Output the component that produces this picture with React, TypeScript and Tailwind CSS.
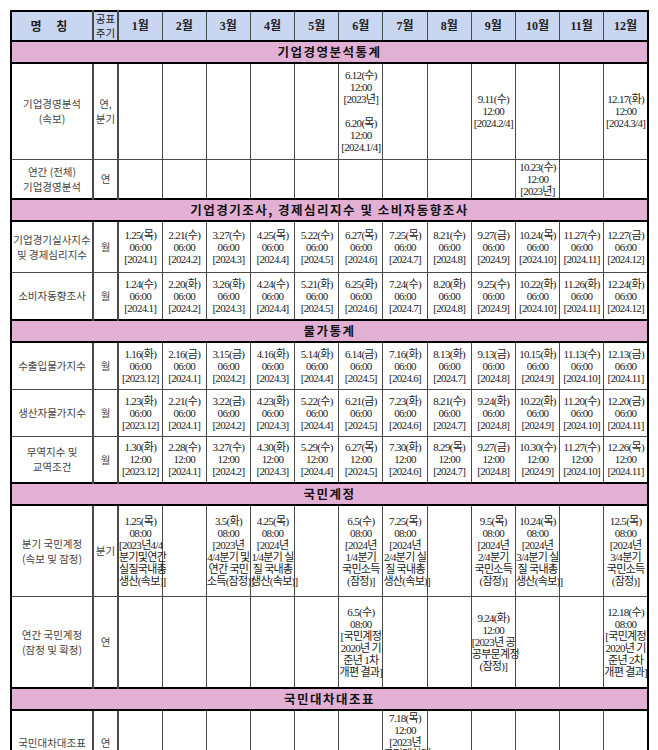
import React from "react";

type Cell = string[] | null;
type Row = { name: string[]; cycle: string[]; cells: Cell[]; h: string };
type Section = { title: string; rows: Row[] };

const P24 = ["2024.1", "2024.2", "2024.3", "2024.4", "2024.5", "2024.6", "2024.7", "2024.8", "2024.9", "2024.10", "2024.11", "2024.12"];
const P23 = ["2023.12", ...P24.slice(0, 11)];

const monthly = (dates: string[], time: string, periods: string[]): Cell[] =>
  dates.map((d, i) => [d, time, `[${periods[i]}]`]);

const at = (entries: Record<number, string[]>): Cell[] =>
  Array.from({ length: 12 }, (_, i) => entries[i + 1] ?? null);

const SECTIONS: Section[] = [
  {
    title: "기업경영분석통계",
    rows: [
      {
        name: ["기업경영분석", "(속보)"],
        cycle: ["연,", "분기"],
        h: "h-[96px]",
        cells: at({
          6: ["6.12(수)", "12:00", "[2023년]", "", "6.20(목)", "12:00", "[2024.1/4]"],
          9: ["9.11(수)", "12:00", "[2024.2/4]"],
          12: ["12.17(화)", "12:00", "[2024.3/4]"],
        }),
      },
      {
        name: ["연간 (전체)", "기업경영분석"],
        cycle: ["연"],
        h: "h-[40px]",
        cells: at({ 10: ["10.23(수)", "12:00", "[2023년]"] }),
      },
    ],
  },
  {
    title: "기업경기조사, 경제심리지수 및 소비자동향조사",
    rows: [
      {
        name: ["기업경기실사지수", "및 경제심리지수"],
        cycle: ["월"],
        h: "h-[51px]",
        cells: monthly(
          ["1.25(목)", "2.21(수)", "3.27(수)", "4.25(목)", "5.22(수)", "6.27(목)", "7.25(목)", "8.21(수)", "9.27(금)", "10.24(목)", "11.27(수)", "12.27(금)"],
          "06:00",
          P24
        ),
      },
      {
        name: ["소비자동향조사"],
        cycle: ["월"],
        h: "h-[48px]",
        cells: monthly(
          ["1.24(수)", "2.20(화)", "3.26(화)", "4.24(수)", "5.21(화)", "6.25(화)", "7.24(수)", "8.20(화)", "9.25(수)", "10.22(화)", "11.26(화)", "12.24(화)"],
          "06:00",
          P24
        ),
      },
    ],
  },
  {
    title: "물가통계",
    rows: [
      {
        name: ["수출입물가지수"],
        cycle: ["월"],
        h: "h-[47px]",
        cells: monthly(
          ["1.16(화)", "2.16(금)", "3.15(금)", "4.16(화)", "5.14(화)", "6.14(금)", "7.16(화)", "8.13(화)", "9.13(금)", "10.15(화)", "11.13(수)", "12.13(금)"],
          "06:00",
          P23
        ),
      },
      {
        name: ["생산자물가지수"],
        cycle: ["월"],
        h: "h-[47px]",
        cells: monthly(
          ["1.23(화)", "2.21(수)", "3.22(금)", "4.23(화)", "5.22(수)", "6.21(금)", "7.23(화)", "8.21(수)", "9.24(화)", "10.22(화)", "11.20(수)", "12.20(금)"],
          "06:00",
          P23
        ),
      },
      {
        name: ["무역지수 및", "교역조건"],
        cycle: ["월"],
        h: "h-[47px]",
        cells: monthly(
          ["1.30(화)", "2.28(수)", "3.27(수)", "4.30(화)", "5.29(수)", "6.27(목)", "7.30(화)", "8.29(목)", "9.27(금)", "10.30(수)", "11.27(수)", "12.26(목)"],
          "12:00",
          P23
        ),
      },
    ],
  },
  {
    title: "국민계정",
    rows: [
      {
        name: ["분기 국민계정", "(속보 및 잠정)"],
        cycle: ["분기"],
        h: "h-[91px]",
        cells: at({
          1: ["1.25(목)", "08:00", "[2023년4/4", "분기및연간", "실질국내총", "생산(속보)]"],
          3: ["3.5(화)", "08:00", "[2023년", "4/4분기 및", "연간 국민", "소득(잠정)]"],
          4: ["4.25(목)", "08:00", "[2024년", "1/4분기 실", "질 국내총", "생산(속보)]"],
          6: ["6.5(수)", "08:00", "[2024년", "1/4분기", "국민소득", "(잠정)]"],
          7: ["7.25(목)", "08:00", "[2024년", "2/4분기 실", "질 국내총", "생산(속보)]"],
          9: ["9.5(목)", "08:00", "[2024년", "2/4분기", "국민소득", "(잠정)]"],
          10: ["10.24(목)", "08:00", "[2024년", "3/4분기 실", "질 국내총", "생산(속보)]"],
          12: ["12.5(목)", "08:00", "[2024년", "3/4분기", "국민소득", "(잠정)]"],
        }),
      },
      {
        name: ["연간 국민계정", "(잠정 및 확정)"],
        cycle: ["연"],
        h: "h-[92px]",
        cells: at({
          6: ["6.5(수)", "08:00", "[국민계정", "2020년 기", "준년 1차", "개편 결과]"],
          9: ["9.24(화)", "12:00", "[2023년 공", "공부문계정", "(잠정)]"],
          12: ["12.18(수)", "08:00", "[국민계정", "2020년 기", "준년 2차", "개편 결과]"],
        }),
      },
    ],
  },
  {
    title: "국민대차대조표",
    rows: [
      {
        name: ["국민대차대조표"],
        cycle: ["연"],
        h: "h-[64px]",
        cells: at({ 7: ["7.18(목)", "12:00", "[2023년", "국민대차대", "조표(잠정)]"] }),
      },
    ],
  },
];

const cellBorder = "border border-[#4a4a4a]";

function Lines({ lines }: { lines: string[] }) {
  return (
    <>
      {lines.map((l, i) => (
        <div key={i} className="whitespace-nowrap">{l === "" ? "\u00a0" : l}</div>
      ))}
    </>
  );
}

export default function App() {
  return (
    <div className="bg-white min-h-screen p-[10px] text-[#222]">
      <table className="table-fixed border-collapse w-[639px] border-2 border-black">
        <colgroup>
          <col className="w-[82px]" />
          <col className="w-[25px]" />
          {Array.from({ length: 12 }, (_, i) => <col key={i} />)}
        </colgroup>
        <thead>
          <tr className="bg-[#c8d6f2]">
            <th className={`${cellBorder} border-r-2 border-b-2 border-b-black h-[30px] text-[12px] font-bold tracking-[6px] font-['Noto_Sans_CJK_KR',sans-serif]`}>명 칭</th>
            <th className={`${cellBorder} border-r-2 border-b-2 border-b-black text-[10.5px] leading-[14px] font-normal font-['Noto_Sans_CJK_KR',sans-serif]`}>
              <div>공표</div>
              <div>주기</div>
            </th>
            {Array.from({ length: 12 }, (_, i) => (
              <th key={i} className={`${cellBorder} border-b-2 border-b-black text-[12px] font-bold font-['Liberation_Serif','Noto_Sans_CJK_KR',serif]`}>
                {i + 1}월
              </th>
            ))}
          </tr>
        </thead>
        <tbody>
          {SECTIONS.map((s) => (
            <React.Fragment key={s.title}>
              <tr>
                <td colSpan={14} className="h-[22px] bg-[#e3b0d5] border-2 border-black text-center text-[12.5px] font-bold tracking-[1.5px] text-[#111] font-['Noto_Sans_CJK_KR',sans-serif]">
                  {s.title}
                </td>
              </tr>
              {s.rows.map((r) => (
                <tr key={r.name.join("")}>
                  <td className={`${cellBorder} border-r-2 ${r.h} text-center text-[10.5px] leading-[15px] text-[#444] font-['Noto_Sans_CJK_KR',sans-serif]`}>
                    <Lines lines={r.name} />
                  </td>
                  <td className={`${cellBorder} border-r-2 text-center text-[10.5px] leading-[15px] text-[#444] font-['Noto_Sans_CJK_KR',sans-serif]`}>
                    <Lines lines={r.cycle} />
                  </td>
                  {r.cells.map((c, i) => (
                    <td key={i} className={`${cellBorder} p-0 text-center align-middle text-[11px] leading-[12px] tracking-[-0.7px] font-['Liberation_Serif','Noto_Sans_CJK_KR',serif]`}>
                      {c && <Lines lines={c} />}
                    </td>
                  ))}
                </tr>
              ))}
            </React.Fragment>
          ))}
        </tbody>
      </table>
    </div>
  );
}
